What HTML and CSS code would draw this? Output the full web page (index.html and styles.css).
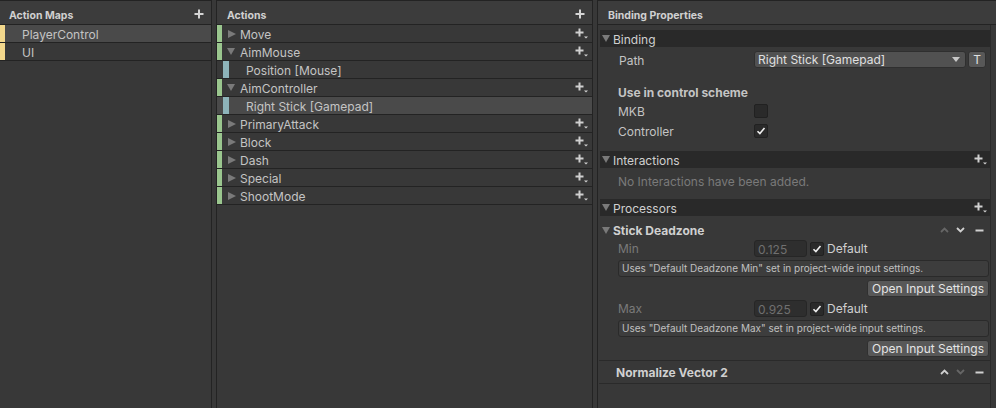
FILE: index.html
```html
<!DOCTYPE html>
<html lang="en">
<head>
    <meta charset="UTF-8">
    <title>Input Actions</title>
    <link rel="stylesheet" href="styles.css">
</head>
<body>
    <div class="window">
        <!-- Action maps -->
        <section class="panel maps">
            <div class="panel-head">
                <span>Action Maps</span>
                <svg class="plus" width="10" height="10" viewBox="0 0 10 10"><path d="M5 0.5v9M0.5 5h9" stroke="currentColor" stroke-width="2"/></svg>
            </div>
            <div class="row map selected"><span class="map-bar"></span><span class="label">PlayerControl</span></div>
            <div class="row map"><span class="map-bar"></span><span class="label">UI</span></div>
        </section>

        <!-- Actions -->
        <section class="panel actions">
            <div class="panel-head">
                <span>Actions</span>
                <svg class="plus" width="10" height="10" viewBox="0 0 10 10"><path d="M5 0.5v9M0.5 5h9" stroke="currentColor" stroke-width="2"/></svg>
            </div>
            <div class="row action"><span class="act-bar"></span><span class="arrow-right"></span><span class="label">Move</span><svg class="plus-drop" width="13" height="11" viewBox="0 0 13 11"><path d="M4.5 0.5v8M0.5 4.5h8" stroke="currentColor" stroke-width="2"/><path d="M9 8.5h4l-2 2z" fill="currentColor"/></svg></div>
            <div class="row action"><span class="act-bar"></span><span class="arrow-down"></span><span class="label">AimMouse</span><svg class="plus-drop" width="13" height="11" viewBox="0 0 13 11"><path d="M4.5 0.5v8M0.5 4.5h8" stroke="currentColor" stroke-width="2"/><path d="M9 8.5h4l-2 2z" fill="currentColor"/></svg></div>
            <div class="row binding"><span class="bind-bar"></span><span class="label">Position [Mouse]</span></div>
            <div class="row action"><span class="act-bar"></span><span class="arrow-down"></span><span class="label">AimController</span><svg class="plus-drop" width="13" height="11" viewBox="0 0 13 11"><path d="M4.5 0.5v8M0.5 4.5h8" stroke="currentColor" stroke-width="2"/><path d="M9 8.5h4l-2 2z" fill="currentColor"/></svg></div>
            <div class="row binding selected"><span class="bind-bar"></span><span class="label">Right Stick [Gamepad]</span></div>
            <div class="row action"><span class="act-bar"></span><span class="arrow-right"></span><span class="label">PrimaryAttack</span><svg class="plus-drop" width="13" height="11" viewBox="0 0 13 11"><path d="M4.5 0.5v8M0.5 4.5h8" stroke="currentColor" stroke-width="2"/><path d="M9 8.5h4l-2 2z" fill="currentColor"/></svg></div>
            <div class="row action"><span class="act-bar"></span><span class="arrow-right"></span><span class="label">Block</span><svg class="plus-drop" width="13" height="11" viewBox="0 0 13 11"><path d="M4.5 0.5v8M0.5 4.5h8" stroke="currentColor" stroke-width="2"/><path d="M9 8.5h4l-2 2z" fill="currentColor"/></svg></div>
            <div class="row action"><span class="act-bar"></span><span class="arrow-right"></span><span class="label">Dash</span><svg class="plus-drop" width="13" height="11" viewBox="0 0 13 11"><path d="M4.5 0.5v8M0.5 4.5h8" stroke="currentColor" stroke-width="2"/><path d="M9 8.5h4l-2 2z" fill="currentColor"/></svg></div>
            <div class="row action"><span class="act-bar"></span><span class="arrow-right"></span><span class="label">Special</span><svg class="plus-drop" width="13" height="11" viewBox="0 0 13 11"><path d="M4.5 0.5v8M0.5 4.5h8" stroke="currentColor" stroke-width="2"/><path d="M9 8.5h4l-2 2z" fill="currentColor"/></svg></div>
            <div class="row action"><span class="act-bar"></span><span class="arrow-right"></span><span class="label">ShootMode</span><svg class="plus-drop" width="13" height="11" viewBox="0 0 13 11"><path d="M4.5 0.5v8M0.5 4.5h8" stroke="currentColor" stroke-width="2"/><path d="M9 8.5h4l-2 2z" fill="currentColor"/></svg></div>
        </section>

        <!-- Binding properties -->
        <section class="panel props">
            <div class="panel-head"><span>Binding Properties</span></div>
            <div class="props-body">
                <div class="foldout"><span class="arrow-down"></span><span class="label">Binding</span></div>

                <div class="field path-row">
                    <span class="field-label">Path</span>
                    <div class="dropdown"><span>Right Stick [Gamepad]</span><span class="caret"></span></div>
                    <div class="t-btn">T</div>
                </div>

                <div class="subhead">Use in control scheme</div>
                <div class="field check-row">
                    <span class="field-label">MKB</span>
                    <span class="checkbox"></span>
                </div>
                <div class="field check-row">
                    <span class="field-label">Controller</span>
                    <span class="checkbox"><svg width="10" height="10" viewBox="0 0 10 10"><path d="M1.5 5.2l2.4 2.4 4.6-5.6" fill="none" stroke="currentColor" stroke-width="1.6"/></svg></span>
                </div>

                <div class="foldout gap"><span class="arrow-down"></span><span class="label">Interactions</span><svg class="plus-drop" width="13" height="11" viewBox="0 0 13 11"><path d="M4.5 0.5v8M0.5 4.5h8" stroke="currentColor" stroke-width="2"/><path d="M9 8.5h4l-2 2z" fill="currentColor"/></svg></div>
                <div class="empty-note">No Interactions have been added.</div>

                <div class="foldout gap tight"><span class="arrow-down"></span><span class="label">Processors</span><svg class="plus-drop" width="13" height="11" viewBox="0 0 13 11"><path d="M4.5 0.5v8M0.5 4.5h8" stroke="currentColor" stroke-width="2"/><path d="M9 8.5h4l-2 2z" fill="currentColor"/></svg></div>

                <div class="proc-head">
                    <span class="arrow-down"></span>
                    <span class="proc-name">Stick Deadzone</span>
                    <span class="proc-tools">
                        <svg class="dim" width="9" height="6" viewBox="0 0 9 6"><path d="M1 5l3.5-3.5L8 5" fill="none" stroke="currentColor" stroke-width="1.8"/></svg>
                        <svg width="9" height="6" viewBox="0 0 9 6"><path d="M1 1l3.5 3.5L8 1" fill="none" stroke="currentColor" stroke-width="1.8"/></svg>
                        <svg width="9" height="3" viewBox="0 0 9 3"><path d="M0.5 1.5h8" stroke="currentColor" stroke-width="2"/></svg>
                    </span>
                </div>

                <div class="field param-row first">
                    <span class="field-label dim-text">Min</span>
                    <span class="num-box">0.125</span>
                    <span class="checkbox"><svg width="10" height="10" viewBox="0 0 10 10"><path d="M1.5 5.2l2.4 2.4 4.6-5.6" fill="none" stroke="currentColor" stroke-width="1.6"/></svg></span>
                    <span class="check-label">Default</span>
                </div>
                <div class="helpbox">Uses "Default Deadzone Min" set in project-wide input settings.</div>
                <div class="btn-row"><div class="btn">Open Input Settings</div></div>

                <div class="field param-row">
                    <span class="field-label dim-text">Max</span>
                    <span class="num-box">0.925</span>
                    <span class="checkbox"><svg width="10" height="10" viewBox="0 0 10 10"><path d="M1.5 5.2l2.4 2.4 4.6-5.6" fill="none" stroke="currentColor" stroke-width="1.6"/></svg></span>
                    <span class="check-label">Default</span>
                </div>
                <div class="helpbox">Uses "Default Deadzone Max" set in project-wide input settings.</div>
                <div class="btn-row"><div class="btn">Open Input Settings</div></div>

                <div class="proc-head boxed">
                    <span class="proc-name">Normalize Vector 2</span>
                    <span class="proc-tools">
                        <svg width="9" height="6" viewBox="0 0 9 6"><path d="M1 5l3.5-3.5L8 5" fill="none" stroke="currentColor" stroke-width="1.8"/></svg>
                        <svg class="dim" width="9" height="6" viewBox="0 0 9 6"><path d="M1 1l3.5 3.5L8 1" fill="none" stroke="currentColor" stroke-width="1.8"/></svg>
                        <svg width="9" height="3" viewBox="0 0 9 3"><path d="M0.5 1.5h8" stroke="currentColor" stroke-width="2"/></svg>
                    </span>
                </div>
            </div>
        </section>
    </div>
</body>
</html>
```

FILE: styles.css
```css
:root {
    --bg: #383838;
    --bg-head: #3c3c3c;
    --line: #232323;
    --text: #c4c4c4;
    --text-dim: #7a7a7a;
    --selected: #4a4a4a;
    --map-color: #f3d88c;
    --action-color: #9ac68e;
    --binding-color: #8db3b9;
    --foldout-bg: #292929;
    --arrow: #7a7a7a;
}

* {
    margin: 0;
    padding: 0;
    box-sizing: border-box;
}

body {
    background-color: var(--bg);
    color: var(--text);
    font-family: Inter, "Noto Sans", sans-serif;
    font-size: 12px;
    width: 996px;
    height: 408px;
    overflow: hidden;
}

.window {
    display: flex;
    gap: 4px;
    height: 408px;
}

.panel {
    background-color: var(--bg);
    border: 1px solid var(--line);
    border-bottom: none;
    height: 100%;
}

.maps {
    width: 212px;
    border-left: none;
}

.actions {
    width: 377px;
}

.props {
    flex: 1;
    border-right: none;
    display: flex;
    flex-direction: column;
}

.panel-head {
    height: 24px;
    display: flex;
    align-items: center;
    justify-content: space-between;
    padding: 6px 7px 0 8px;
    background-color: var(--bg-head);
    border-bottom: 1px solid var(--line);
    font-size: 10.5px;
    font-weight: 700;
    color: #d0d0d0;
}

.maps .panel-head {
    padding-left: 9px;
    padding-right: 7px;
}

.actions .panel-head {
    padding-left: 10px;
}

.props .panel-head {
    padding-left: 10px;
}

.plus {
    color: #d4d4d4;
    margin-top: -4px;
}

/* Tree rows */
.row {
    height: 18px;
    display: flex;
    align-items: center;
    border-bottom: 1px solid var(--line);
    white-space: nowrap;
}

.row .label {
    padding-top: 1px;
}

.row.selected {
    background-color: var(--selected);
}

.map-bar {
    width: 5px;
    height: 100%;
    background-color: var(--map-color);
    margin-right: 17px;
}

.act-bar {
    width: 5px;
    height: 100%;
    background-color: var(--action-color);
    margin-right: 6px;
}

.bind-bar {
    width: 6px;
    height: 100%;
    background-color: var(--binding-color);
    margin-left: 6px;
    margin-right: 17px;
}

.arrow-right {
    width: 0;
    height: 0;
    border-left: 8px solid var(--arrow);
    border-top: 4.5px solid transparent;
    border-bottom: 4.5px solid transparent;
    margin-right: 4px;
}

.arrow-down {
    width: 0;
    height: 0;
    border-top: 7px solid var(--arrow);
    border-left: 4.5px solid transparent;
    border-right: 4.5px solid transparent;
    margin-right: 4px;
}

.action .arrow-down {
    margin-left: -1px;
    margin-right: 5px;
}

.plus-drop {
    margin-left: auto;
    margin-right: 4px;
    color: #d0d0d0;
}

/* Binding properties */
.props-body {
    flex: 1;
    margin-right: 5px;
    border-right: 1px solid #2a2a2a;
    padding: 5px 0 0 2px;
}

.foldout {
    height: 17px;
    display: flex;
    align-items: center;
    background-color: var(--foldout-bg);
    padding-left: 2px;
}

.foldout .arrow-down {
    margin-right: 3px;
}

.foldout .label {
    color: #d0d0d0;
    padding-top: 1px;
}

.foldout .plus-drop {
    margin-right: 3px;
}

.foldout.gap {
    margin-top: 10px;
}

.foldout.tight {
    margin-top: 9px;
}

.field {
    display: flex;
    align-items: center;
    padding-left: 18px;
}

.field-label {
    width: 136px;
    flex-shrink: 0;
}

.path-row {
    height: 17px;
    margin-top: 4px;
}

.path-row .field-label {
    padding-left: 1px;
    padding-top: 1px;
}

.dropdown {
    width: 212px;
    height: 17px;
    display: flex;
    align-items: center;
    justify-content: space-between;
    padding: 0 5px 0 3px;
    background-color: #515151;
    border: 1px solid #2f2f2f;
    border-radius: 3px;
    color: #e0e0e0;
}

.caret {
    width: 0;
    height: 0;
    border-top: 5px solid #c8c8c8;
    border-left: 4px solid transparent;
    border-right: 4px solid transparent;
}

.t-btn {
    width: 18px;
    height: 17px;
    margin-left: 2px;
    background-color: #585858;
    border: 1px solid #303030;
    border-radius: 3px;
    display: flex;
    align-items: center;
    justify-content: center;
    color: #e0e0e0;
}

.subhead {
    height: 18px;
    margin-top: 15px;
    padding-left: 18px;
    font-weight: 700;
    display: flex;
    align-items: center;
}

.check-row {
    height: 20px;
}

.checkbox {
    width: 14px;
    height: 14px;
    background-color: #2a2a2a;
    border: 1px solid #212121;
    border-radius: 2px;
    display: flex;
    align-items: center;
    justify-content: center;
    color: #f0f0f0;
}

.empty-note {
    height: 18px;
    margin-top: 4px;
    padding-left: 18px;
    color: var(--text-dim);
    display: flex;
    align-items: center;
}

.proc-head {
    height: 20px;
    margin-top: 4px;
    display: flex;
    align-items: center;
    padding-left: 2px;
}

.proc-head .arrow-down {
    margin-right: 3px;
}

.proc-name {
    font-weight: 700;
    color: #d0d0d0;
}

.proc-tools {
    margin-left: auto;
    margin-right: 6px;
    display: flex;
    align-items: center;
    gap: 7px;
    color: #d0d0d0;
}

.proc-tools svg:last-child {
    margin-left: 3px;
}

.proc-tools .dim {
    color: #666;
}

.param-row {
    height: 17px;
    margin-top: 3px;
}

.param-row.first {
    margin-top: 0;
}

.dim-text {
    color: var(--text-dim);
}

.num-box {
    width: 53px;
    height: 17px;
    background-color: #2e2e2e;
    border: 1px solid #262626;
    border-radius: 3px;
    color: #707070;
    padding: 1px 0 0 3px;
    margin-right: 3px;
}

.check-label {
    margin-left: 3px;
    color: #d0d0d0;
}

.helpbox {
    height: 17px;
    margin: 3px 1px 0 18px;
    padding: 0 0 0 3px;
    background-color: #3d3d3d;
    border: 1px solid #2a2a2a;
    border-radius: 3px;
    font-size: 10px;
    line-height: 15px;
    color: #c0c0c0;
    white-space: nowrap;
}

.btn-row {
    display: flex;
    justify-content: flex-end;
    margin-top: 3px;
    padding-right: 1px;
}

.btn {
    width: 122px;
    height: 17px;
    background-color: #585858;
    border: 1px solid #303030;
    border-radius: 3px;
    color: #e4e4e4;
    display: flex;
    align-items: center;
    justify-content: center;
}

.proc-head.boxed {
    height: 24px;
    margin: 3px 0 0 -1px;
    padding-left: 17px;
    border-top: 1px solid #2a2a2a;
    border-bottom: 1px solid #2a2a2a;
}
```
